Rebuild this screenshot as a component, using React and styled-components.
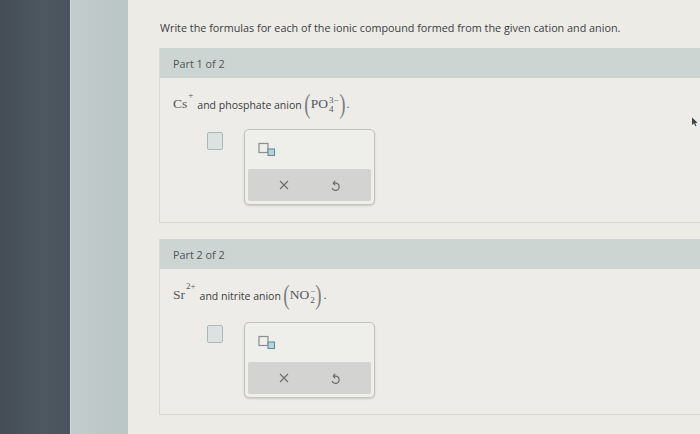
import React from "react";
import styled, { createGlobalStyle } from "styled-components";

const GlobalStyle = createGlobalStyle`
  html, body {
    margin: 0;
    padding: 0;
    width: 700px;
    height: 434px;
    overflow: hidden;
    background: #ecebe6;
  }
  * { box-sizing: border-box; }
`;

const Page = styled.div`
  display: flex;
  width: 700px;
  height: 434px;
  font-family: "Open Sans", "DejaVu Sans", sans-serif;
  color: #3b3d3f;
`;

const DarkRail = styled.div`
  width: 70px;
  background: linear-gradient(90deg, #444d55, #4d5861 60%, #4a545c);
`;

const LightRail = styled.div`
  width: 58px;
  background: linear-gradient(90deg, #c2cccc, #bac5c5);
  border-left: 1px solid #d3dada;
`;

const Main = styled.div`
  position: relative;
  flex: 1;
  padding: 20px 0 0 31px;
  background: #ecebe6;
`;

const Title = styled.div`
  font-size: 10.8px;
  line-height: 16px;
  height: 28px;
  padding-left: 1px;
`;

const Part = styled.section`
  border: 1px solid #d9d9d4;
  border-right: none;
  border-top: none;
  margin-bottom: ${(p) => p.$gap}px;
  background: #edece8;
`;

const PartHeader = styled.div`
  height: 30px;
  display: flex;
  align-items: center;
  padding-left: 13px;
  background: #cdd5d3;
  font-size: 10.8px;
  color: #505457;
`;

const PartBody = styled.div`
  height: ${(p) => p.$h}px;
  padding: 10px 0 0 13px;
`;

const Question = styled.div`
  display: flex;
  align-items: center;
  height: 32px;
  font-size: 10.5px;
`;

const Ion = styled.span`
  display: inline-flex;
  align-items: flex-start;
  font-family: "Liberation Serif", "DejaVu Serif", serif;
  font-size: 13.5px;
  margin-right: 4px;
  color: #55585b;
`;

const Charge = styled.sup`
  font-size: 9px;
  line-height: 1;
  margin-top: -5px;
  margin-left: 1px;
`;

const Words = styled.span`
  margin-right: 2px;
  margin-top: 2px;
`;

const Formula = styled.span`
  display: inline-flex;
  align-items: center;
  font-family: "Liberation Serif", "DejaVu Serif", serif;
  font-size: 13.5px;
  color: #55585b;
`;

const Paren = styled.span`
  font-size: 27px;
  line-height: 1;
  display: inline-block;
  transform: scaleX(0.7);
  margin: 0 -1px;
  color: #7a7d80;
`;

const Scripts = styled.span`
  display: inline-flex;
  flex-direction: column;
  font-size: 9px;
  line-height: 9px;
  margin-left: 1px;
  margin-top: 2px;
`;

const Dot = styled.span`
  font-size: 12px;
  margin-left: 1px;
  align-self: flex-end;
  margin-bottom: 6px;
`;

const AnswerRow = styled.div`
  display: flex;
  align-items: flex-start;
  margin-top: ${(p) => p.$top}px;
  padding-left: ${(p) => p.$left}px;
  gap: ${(p) => p.$gap}px;
`;

const Slot = styled.div`
  width: 16px;
  height: 18px;
  margin-top: 3px;
  border: 1.5px solid #a9b9b9;
  border-radius: 2px;
  background: #dbe2e2;
`;

const Palette = styled.div`
  width: 131px;
  height: 76px;
  border: 1px solid #c3c3c1;
  border-radius: 5px;
  background: #eeeeeb;
  box-shadow: 0 1px 2px rgba(0, 0, 0, 0.15);
  display: flex;
  flex-direction: column;
`;

const PaletteTop = styled.div`
  flex: 1;
  display: flex;
  align-items: center;
  padding-left: 13px;
`;

const ActionBar = styled.div`
  height: 32px;
  margin: 0 3px 3px;
  border-radius: 2px;
  background: #d3d4d2;
  display: flex;
  align-items: center;
  justify-content: space-around;
  padding: 0 10px;
`;

const Cursor = styled.div`
  position: absolute;
  left: 563px;
  top: 110px;
`;

const SubIcon = () => (
  <svg width="18" height="16" viewBox="0 0 18 16">
    <rect x="1" y="1.5" width="9" height="9" fill="none" stroke="#8a8e92" strokeWidth="1.2" />
    <rect x="10" y="7" width="6.5" height="6.5" fill="#b9d3d8" stroke="#5f8f9c" strokeWidth="1.1" />
  </svg>
);

const CloseIcon = () => (
  <svg width="10" height="10" viewBox="0 0 10 10">
    <path d="M1 1 L9 9 M9 1 L1 9" stroke="#6a6d70" strokeWidth="1.1" fill="none" />
  </svg>
);

const UndoIcon = () => (
  <svg width="11" height="13" viewBox="0 0 11 13">
    <path d="M3.6 4.2 L5.5 4.2 A3.6 3.6 0 1 1 2.1 9" stroke="#6a6d70" strokeWidth="1.2" fill="none" />
    <path d="M5.2 1.8 L3.2 4.2 L5.2 6.4" stroke="#6a6d70" strokeWidth="1.2" fill="none" strokeLinejoin="round" />
  </svg>
);

const PointerIcon = () => (
  <svg width="7" height="10" viewBox="0 0 7 10">
    <path d="M1 0.5 L1 8 L3 6.3 L4.4 9.3 L5.5 8.8 L4.2 5.9 L6.6 5.7 Z" fill="#3c4247" />
  </svg>
);

const AnswerArea = ({ top, left, gap }) => (
  <AnswerRow $top={top} $left={left} $gap={gap}>
    <Slot />
    <Palette>
      <PaletteTop>
        <SubIcon />
      </PaletteTop>
      <ActionBar>
        <CloseIcon />
        <UndoIcon />
      </ActionBar>
    </Palette>
  </AnswerRow>
);

export default function App() {
  return (
    <>
      <GlobalStyle />
      <Page>
        <DarkRail />
        <LightRail />
        <Main>
          <Title>
            Write the formulas for each of the ionic compound formed from the given cation and anion.
          </Title>

          <Part $gap={16}>
            <PartHeader>Part 1 of 2</PartHeader>
            <PartBody $h={144}>
              <Question>
                <Ion>
                  Cs<Charge>+</Charge>
                </Ion>
                <Words>and phosphate anion</Words>
                <Formula>
                  <Paren>(</Paren>
                  PO
                  <Scripts>
                    <span>3−</span>
                    <span>4</span>
                  </Scripts>
                  <Paren>)</Paren>
                  <Dot>.</Dot>
                </Formula>
              </Question>
              <AnswerArea top={9} left={34} gap={21} />
            </PartBody>
          </Part>

          <Part $gap={0}>
            <PartHeader>Part 2 of 2</PartHeader>
            <PartBody $h={145}>
              <Question>
                <Ion>
                  Sr<Charge>2+</Charge>
                </Ion>
                <Words>and nitrite anion</Words>
                <Formula>
                  <Paren>(</Paren>
                  NO
                  <Scripts>
                    <span>−</span>
                    <span>2</span>
                  </Scripts>
                  <Paren>)</Paren>
                  <Dot>.</Dot>
                </Formula>
              </Question>
              <AnswerArea top={11} left={34} gap={21} />
            </PartBody>
          </Part>

          <Cursor>
            <PointerIcon />
          </Cursor>
        </Main>
      </Page>
    </>
  );
}
